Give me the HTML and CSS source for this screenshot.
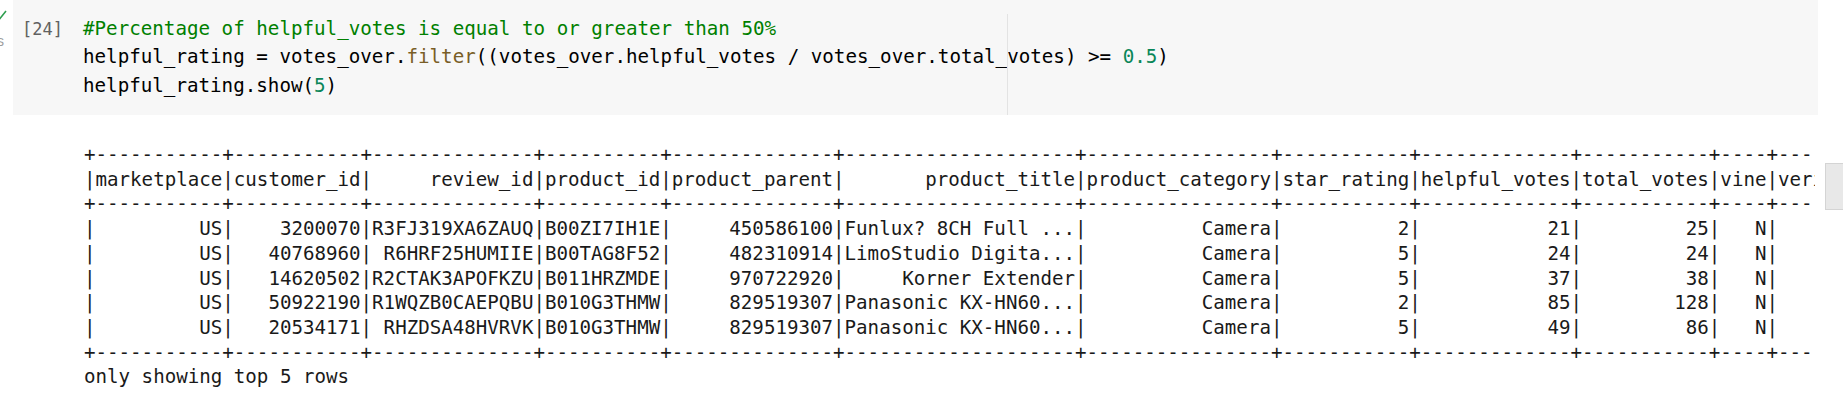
FILE: index.html
```html
<!DOCTYPE html>
<html>
<head>
<meta charset="utf-8">
<link rel="stylesheet" href="styles.css">
</head>
<body>
<div class="page">
  <div class="cell">
    <div class="status">
      <svg class="check" width="14" height="12" viewBox="0 0 14 12"><path d="M1 7 L5 11 L13 1" fill="none" stroke="#2e9e4f" stroke-width="1.6"/></svg>
      <span class="time">0s</span>
    </div>
    <div class="code">
      <div class="gutter">[24]</div>
      <div class="lines">
        <div class="line"><span class="c">#Percentage of helpful_votes is equal to or greater than 50%</span></div>
        <div class="line">helpful_rating = votes_over.<span class="f">filter</span>((votes_over.helpful_votes / votes_over.total_votes) &gt;= <span class="n">0.5</span>)</div>
        <div class="line">helpful_rating.show(<span class="n">5</span>)</div>
      </div>
      <div class="ruler"></div>
    </div>
  </div>
  <div class="output">
<pre class="table">+-----------+-----------+--------------+----------+--------------+--------------------+----------------+-----------+-------------+-----------+----+-----------------+
|marketplace|customer_id|     review_id|product_id|product_parent|       product_title|product_category|star_rating|helpful_votes|total_votes|vine|verified_purchase|
+-----------+-----------+--------------+----------+--------------+--------------------+----------------+-----------+-------------+-----------+----+-----------------+
|         US|    3200070|R3FJ319XA6ZAUQ|B00ZI7IH1E|     450586100|Funlux? 8CH Full ...|          Camera|          2|           21|         25|   N|
|         US|   40768960| R6HRF25HUMIIE|B00TAG8F52|     482310914|LimoStudio Digita...|          Camera|          5|           24|         24|   N|
|         US|   14620502|R2CTAK3APOFKZU|B011HRZMDE|     970722920|     Korner Extender|          Camera|          5|           37|         38|   N|
|         US|   50922190|R1WQZB0CAEPQBU|B010G3THMW|     829519307|Panasonic KX-HN60...|          Camera|          2|           85|        128|   N|
|         US|   20534171| RHZDSA48HVRVK|B010G3THMW|     829519307|Panasonic KX-HN60...|          Camera|          5|           49|         86|   N|
+-----------+-----------+--------------+----------+--------------+--------------------+----------------+-----------+-------------+-----------+----+-----------------+
only showing top 5 rows</pre>
  </div>
  <div class="thumb"></div>
</div>
</body>
</html>
```
FILE: styles.css
```css
html, body {
  margin: 0;
  padding: 0;
  background: #ffffff;
}
.page {
  position: relative;
  width: 1843px;
  height: 401px;
  overflow: hidden;
}
.cell {
  display: flex;
}
.status {
  width: 13px;
  overflow: hidden;
  position: relative;
  flex: none;
}
.check {
  position: absolute;
  left: -7px;
  top: 10px;
}
.time {
  position: absolute;
  right: 9px;
  top: 33px;
  font-family: "Liberation Sans", Arial, sans-serif;
  font-size: 14px;
  color: #9e9e9e;
}
.code {
  position: relative;
  width: 1805px;
  height: 115px;
  background: #f7f7f7;
  display: flex;
  box-sizing: border-box;
  padding-top: 15px;
}
.gutter {
  width: 70px;
  flex: none;
  box-sizing: border-box;
  padding-left: 9px;
  font-family: "DejaVu Sans Mono", monospace;
  font-size: 17px;
  line-height: 28px;
  color: #616161;
}
.lines {
  font-family: "DejaVu Sans Mono", monospace;
  font-size: 19.2px;
  line-height: 28.3px;
  color: #000000;
}
.line {
  white-space: pre;
}
.c { color: #008000; }
.f { color: #795e26; }
.n { color: #098658; }
.ruler {
  position: absolute;
  left: 994px;
  top: 14px;
  bottom: 0;
  width: 1px;
  background: #e3e3e3;
}
.output {
  width: 1815px;
  overflow: hidden;
  box-sizing: border-box;
  padding-left: 84px;
  padding-top: 28px;
}
.table {
  margin: 0;
  font-family: "DejaVu Sans Mono", monospace;
  font-size: 19.15px;
  line-height: 24.7px;
  color: #1a1a1a;
  white-space: pre;
}
.thumb {
  position: absolute;
  left: 1825px;
  top: 163px;
  width: 30px;
  height: 47px;
  background: #e8e8e8;
  border: 1px solid #d4d4d4;
  box-sizing: border-box;
}
```
